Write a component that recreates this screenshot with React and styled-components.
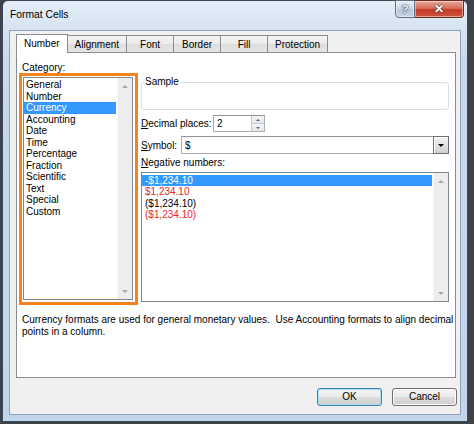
import React from 'react';
import styled, { createGlobalStyle } from 'styled-components';

const Global = createGlobalStyle`
  html, body { margin: 0; padding: 0; }
  body {
    width: 474px; height: 424px; overflow: hidden;
    background: #3f4247;
    font-family: "Liberation Sans", Arial, sans-serif;
    font-size: 10px; color: #000;
  }
  * { box-sizing: border-box; }
`;

const Window = styled.div`
  margin-left: 2px;
  width: 466px;
  height: 422px;
  border: 1px solid #3a4a5e;
  border-radius: 6px 6px 0 0;
  background: linear-gradient(180deg, #e6eef8 0px, #d6e3f2 28px, #c8d9ed 60px, #c3d5eb 100%);
  display: flex;
  flex-direction: column;
`;

const TitleBar = styled.div`
  height: 29px;
  display: flex;
  justify-content: space-between;
  align-items: flex-start;
  padding: 0 3px 0 7px;
`;

const Title = styled.div`
  margin-top: 8px;
  font-size: 10.3px;
  line-height: 12px;
  color: #000;
`;

const Controls = styled.div`
  display: flex;
  margin-top: -1px;
`;

const CaptionButton = styled.div`
  height: 18px;
  width: ${p => p.$w}px;
  display: flex;
  align-items: center;
  justify-content: center;
  border: 1px solid ${p => (p.$close ? '#6b2a20' : '#5d6e85')};
  border-left-width: ${p => (p.$close ? 0 : 1)}px;
  border-radius: ${p => (p.$close ? '0 0 4px 0' : '0 0 0 4px')};
  background: ${p =>
    p.$close
      ? 'linear-gradient(180deg, #e8a698 0%, #d66f5a 45%, #c23a26 55%, #cf5640 100%)'
      : 'linear-gradient(180deg, #e5edf6 0%, #cdd9e8 45%, #b7c8dc 55%, #c6d5e6 100%)'};
  color: #fff;
  font-weight: bold;
  font-size: ${p => (p.$close ? 12 : 11)}px;
  line-height: 1;
  text-shadow: 0 0 2px #333, 0 0 1px #222;
  box-shadow: inset 0 0 0 1px rgba(255,255,255,0.45);
`;

const Client = styled.div`
  flex: 1;
  margin: 0 6px 6px;
  background: #f0f0f0;
  border: 1px solid #8ea2bb;
  padding: 3px 0 0 6px;
  display: flex;
  flex-direction: column;
`;

const TabStrip = styled.div`
  display: flex;
  align-items: flex-end;
  height: 19px;
  margin-bottom: -1px;
  position: relative;
  z-index: 1;
`;

const Tab = styled.div`
  height: ${p => (p.$active ? 19 : 17)}px;
  margin-bottom: ${p => (p.$active ? 0 : 1)}px;
  min-width: 48px;
  padding: 0 7px;
  margin-right: -1px;
  border: 1px solid #898c95;
  border-bottom: none;
  background: ${p => (p.$active ? '#fff' : 'linear-gradient(180deg, #f3f3f3 0%, #ebebeb 50%, #dedede 51%, #e5e5e5 100%)')};
  display: flex;
  align-items: center;
  justify-content: center;
  line-height: 12px;
  padding-top: ${p => (p.$active ? 0 : 1)}px;
`;

const Panel = styled.div`
  width: 440px;
  height: 326px;
  background: #fff;
  border: 1px solid #898c95;
  padding: 9px 0 0 2px;
`;

const Columns = styled.div`
  display: flex;
  gap: 3px;
  align-items: flex-start;
`;

const LeftCol = styled.div`
  width: 119px;
`;

const FieldLabel = styled.div`
  line-height: 11px;
  padding-left: ${p => p.$indent || 0}px;
  margin-top: ${p => p.$mt || 0}px;
  white-space: nowrap;
`;

const Callout = styled.div`
  height: 232px;
  border: 3px solid #f5821f;
  padding: 1px 2px 2px 1px;
`;

const ListBox = styled.div`
  height: ${p => p.$h}px;
  border: 1px solid #828790;
  background: #fff;
  display: flex;
`;

const Items = styled.div`
  flex: 1;
  padding: ${p => p.$pt || 0}px 1px 0 0;
`;

const Item = styled.div`
  line-height: ${p => p.$lh || 11.5}px;
  padding-left: ${p => p.$pl || 2}px;
  white-space: nowrap;
  background: ${p => (p.$selected ? '#3399ff' : 'transparent')};
  color: ${p => (p.$selected ? '#fff' : p.$red ? '#e8262b' : '#000')};
`;

const ScrollBar = styled.div`
  width: 15px;
  background: #ededed;
  border-left: 1px solid #f7f7f7;
  display: flex;
  flex-direction: column;
  justify-content: space-between;
`;

const ArrowCell = styled.div`
  height: 16px;
  display: flex;
  align-items: center;
  justify-content: center;
`;

const Triangle = styled.span`
  width: 0;
  height: 0;
  border-left: ${p => p.$s || 3.5}px solid transparent;
  border-right: ${p => p.$s || 3.5}px solid transparent;
  ${p => (p.$up ? 'border-bottom' : 'border-top')}: ${p => (p.$s ? p.$s - 0.5 : 3)}px solid ${p => p.$color || '#a8a8a8'};
`;

const RightCol = styled.div`
  width: 308px;
  margin-top: 14px;
  display: flex;
  flex-direction: column;
`;

const Sample = styled.fieldset`
  margin: 0;
  padding: 0;
  border: 1px solid #d5dfe5;
  border-radius: 3px;
  min-width: 0;
`;

const Legend = styled.legend`
  margin-left: 2px;
  padding: 0 1px;
  line-height: 12px;
`;

const SampleBody = styled.div`
  height: 21px;
`;

const Row = styled.div`
  display: flex;
  align-items: center;
  height: ${p => p.$h}px;
  margin-top: ${p => p.$mt}px;
`;

const RowLabel = styled.div`
  width: ${p => p.$w}px;
  white-space: nowrap;
`;

const TextBox = styled.div`
  height: 100%;
  width: ${p => (p.$w ? `${p.$w}px` : 'auto')};
  flex: ${p => (p.$w ? 'none' : 1)};
  border: 1px solid #abadb3;
  border-top-color: #8e9297;
  background: #fff;
  display: flex;
  align-items: stretch;
`;

const BoxText = styled.div`
  flex: 1;
  padding-left: 3px;
  display: flex;
  align-items: center;
`;

const Spinner = styled.div`
  width: 13px;
  display: flex;
  flex-direction: column;
  border-left: 1px solid #c7ccd3;
`;

const SpinHalf = styled.div`
  flex: 1;
  display: flex;
  align-items: center;
  justify-content: center;
  background: linear-gradient(180deg, #f6f6f6, #e4e6ea);
  border-top: ${p => (p.$bottom ? '1px solid #c7ccd3' : 'none')};
`;

const DropButton = styled.div`
  width: 16px;
  margin: -1px -1px -1px 0;
  border: 1px solid #6f6f6f;
  background: linear-gradient(180deg, #f2f2f2 0%, #e2e2e2 50%, #cfcfcf 100%);
  box-shadow: inset 1px 1px 0 #fff;
  display: flex;
  align-items: center;
  justify-content: center;
`;

const Underline = styled.span`
  text-decoration: underline;
`;

const Description = styled.div`
  margin-top: 9px;
  padding-left: 3px;
  line-height: 12px;
  white-space: nowrap;
`;

const ButtonRow = styled.div`
  display: flex;
  justify-content: flex-end;
  gap: 10px;
  margin-top: 10px;
  margin-right: 3px;
`;

const Button = styled.div`
  width: 65px;
  height: 18px;
  border: 1px solid ${p => (p.$default ? '#3c7fb1' : '#707070')};
  border-radius: 3px;
  background: linear-gradient(180deg, #f4f4f4 0%, #ebebeb 48%, #dddddd 52%, #cfcfcf 100%);
  box-shadow: inset 0 0 0 1px ${p => (p.$default ? '#a8e0f8' : '#fbfbfb')};
  display: flex;
  align-items: center;
  justify-content: center;
  line-height: 12px;
`;

const categories = ['General', 'Number', 'Currency', 'Accounting', 'Date', 'Time', 'Percentage', 'Fraction', 'Scientific', 'Text', 'Special', 'Custom'];
const tabs = ['Number', 'Alignment', 'Font', 'Border', 'Fill', 'Protection'];
const negatives = [
  { text: '-$1,234.10', selected: true },
  { text: '$1,234.10', red: true },
  { text: '($1,234.10)' },
  { text: '($1,234.10)', red: true },
];

function Scroll() {
  return (
    <ScrollBar>
      <ArrowCell><Triangle $up /></ArrowCell>
      <ArrowCell><Triangle /></ArrowCell>
    </ScrollBar>
  );
}

export default function App() {
  return (
    <>
      <Global />
      <Window>
        <TitleBar>
          <Title>Format Cells</Title>
          <Controls>
            <CaptionButton $w={20}>?</CaptionButton>
            <CaptionButton $w={49} $close>✕</CaptionButton>
          </Controls>
        </TitleBar>
        <Client>
          <TabStrip>
            {tabs.map((t, i) => (
              <Tab key={t} $active={i === 0}>{t}</Tab>
            ))}
          </TabStrip>
          <Panel>
            <Columns>
              <LeftCol>
                <FieldLabel $indent={3}>Category:</FieldLabel>
                <Callout>
                  <ListBox $h={223}>
                    <Items $pt={1}>
                      {categories.map(c => (
                        <Item key={c} $selected={c === 'Currency'}>{c}</Item>
                      ))}
                    </Items>
                    <Scroll />
                  </ListBox>
                </Callout>
              </LeftCol>
              <RightCol>
                <Sample>
                  <Legend>Sample</Legend>
                  <SampleBody />
                </Sample>
                <Row $h={17} $mt={5}>
                  <RowLabel $w={72}><Underline>D</Underline>ecimal places:</RowLabel>
                  <TextBox $w={52}>
                    <BoxText>2</BoxText>
                    <Spinner>
                      <SpinHalf><Triangle $up $s={2.5} $color="#56657a" /></SpinHalf>
                      <SpinHalf $bottom><Triangle $s={2.5} $color="#56657a" /></SpinHalf>
                    </Spinner>
                  </TextBox>
                </Row>
                <Row $h={18} $mt={4}>
                  <RowLabel $w={40}><Underline>S</Underline>ymbol:</RowLabel>
                  <TextBox>
                    <BoxText>$</BoxText>
                    <DropButton><Triangle $s={3.5} $color="#000" /></DropButton>
                  </TextBox>
                </Row>
                <FieldLabel $mt={3}><Underline>N</Underline>egative numbers:</FieldLabel>
                <Row $h={130} $mt={4}>
                  <ListBox $h={130} style={{ flex: 1 }}>
                    <Items $pt={1.5}>
                      {negatives.map((n, i) => (
                        <Item key={i} $pl={3} $selected={n.selected} $red={n.red}>{n.text}</Item>
                      ))}
                    </Items>
                    <Scroll />
                  </ListBox>
                </Row>
              </RightCol>
            </Columns>
            <Description>
              Currency formats are used for general monetary values.&nbsp; Use Accounting formats to align decimal
              <br />
              points in a column.
            </Description>
          </Panel>
          <ButtonRow>
            <Button $default>OK</Button>
            <Button>Cancel</Button>
          </ButtonRow>
        </Client>
      </Window>
    </>
  );
}
